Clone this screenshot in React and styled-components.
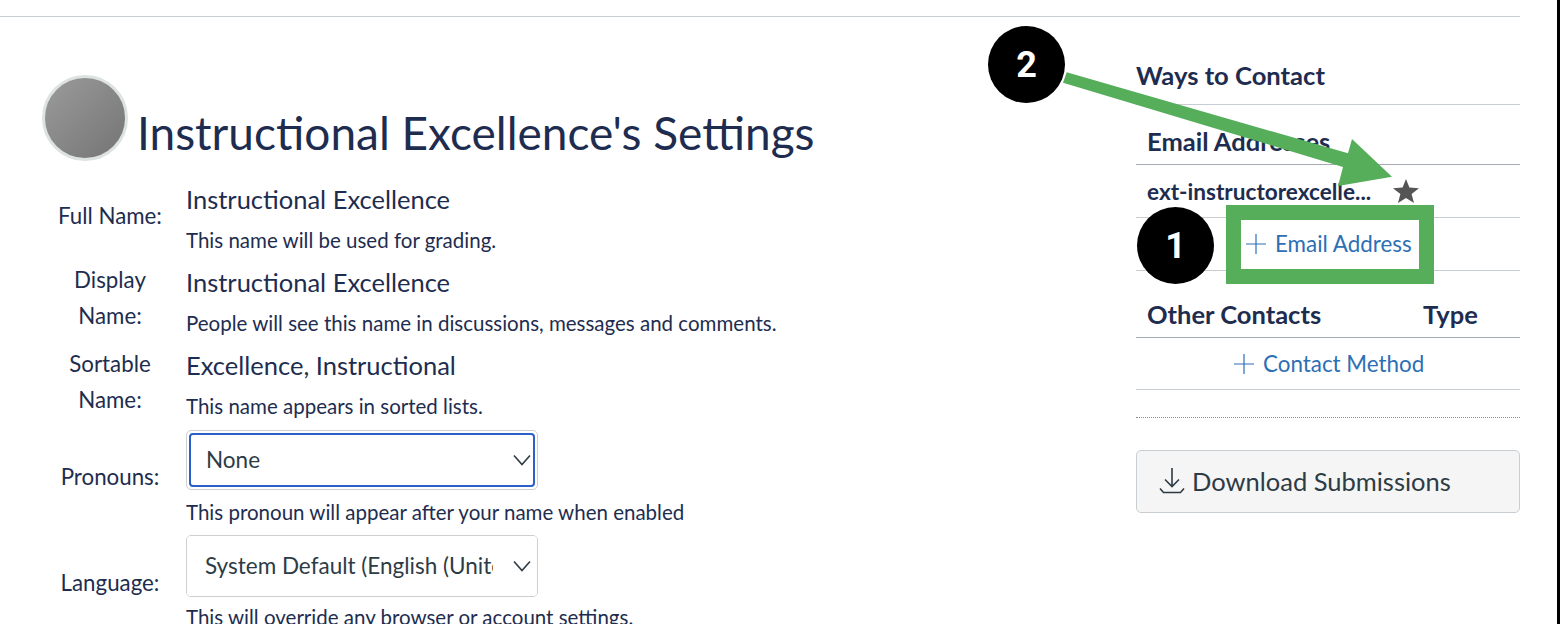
import styled, { createGlobalStyle } from "styled-components";

const GlobalStyle = createGlobalStyle`
    html, body {
        margin: 0;
        padding: 0;
        background: #fff;
        overflow: hidden;
    }
    * {
        box-sizing: border-box;
    }
`

const navy = "#1e2d4f";

const Page = styled.div`
    position: relative;
    width: 1560px;
    height: 624px;
    overflow: hidden;
    background: #fff;
    border-right: 3px solid #000;
    font-family: Lato, "Open Sans", sans-serif;
    color: ${navy};
`
const Inner = styled.div`
    width: 1520px;
    padding-top: 16px;
`
const Columns = styled.div`
    display: flex;
    border-top: 1px solid #c7cdd1;
`
const Main = styled.main`
    flex: 1;
    padding: 58px 0 0 42px;
`
const TitleRow = styled.div`
    display: flex;
    align-items: flex-end;
    gap: 8px;
    height: 86px;
`
const Avatar = styled.div`
    width: 86px;
    height: 86px;
    flex-shrink: 0;
    border-radius: 50%;
    border: 3px solid #dde3e1;
    background: linear-gradient(135deg, #9b9b9b, #747474);
`
const Title = styled.h1`
    margin: 0 0 2px 1px;
    font-size: 46px;
    line-height: 52px;
    font-weight: 400;
    white-space: nowrap;
`
const Form = styled.div`
    display: grid;
    grid-template-columns: 136px 1fr;
    grid-auto-rows: auto;
    margin: 14px 0 0 0;
    column-gap: 8px;
`
const Label = styled.div`
    display: flex;
    align-items: center;
    justify-content: center;
    height: ${(p) => p.$h}px;
    padding-bottom: ${(p) => p.$pb ?? 2}px;
    text-align: center;
    font-size: 22.3px;
    line-height: 35.5px;
`
const Cell = styled.div`
    height: ${(p) => p.$h}px;
    padding-top: ${(p) => p.$top}px;
`
const Value = styled.div`
    font-size: 25.5px;
    line-height: 30px;
`
const Help = styled.div`
    margin-top: ${(p) => p.$gap}px;
    font-size: 20.5px;
    line-height: 26px;
    white-space: nowrap;
`
const SelectBox = styled.div`
    position: relative;
    width: 352px;
    height: ${(p) => p.$h}px;
    padding: ${(p) => (p.$focused ? "2px" : "0")};
    border: 1px solid #ccd0d3;
    border-radius: 5px;
`
const Select = styled.select`
    appearance: none;
    display: block;
    width: 100%;
    height: 100%;
    padding: 0 ${(p) => (p.$focused ? "40px" : "44px")} 2px ${(p) => (p.$focused ? "15px" : "18px")};
    border: ${(p) => (p.$focused ? "2px solid #2c5fc8" : "none")};
    border-radius: 4px;
    background: #fff;
    outline: none;
    font-family: inherit;
    font-size: 22.5px;
    color: #2d3b45;
`
const Chevron = styled.svg`
    position: absolute;
    top: 50%;
    right: 6px;
    width: 18px;
    height: 12px;
    transform: translateY(-50%);
    stroke: #2d3b45;
    stroke-width: 1.6;
    fill: none;
    pointer-events: none;
`
const Aside = styled.aside`
    width: 384px;
    flex-shrink: 0;
`
const Row = styled.div`
    display: flex;
    align-items: ${(p) => (p.$end ? "flex-end" : "center")};
    height: ${(p) => p.$h}px;
    padding-left: ${(p) => p.$left ?? 11}px;
    padding-bottom: ${(p) => p.$pb ?? 0}px;
    border-bottom: 1px solid ${(p) => (p.$dark ? "#a5abb1" : "#c7cdd1")};
`
const SideTitle = styled.h2`
    margin: 0;
    font-size: 25.6px;
    line-height: 30px;
    font-weight: 700;
`
const Head = styled.span`
    font-size: 25.5px;
    line-height: 30px;
    font-weight: 700;
    white-space: nowrap;
`
const TypeHead = styled(Head)`
    margin-left: ${(p) => p.$offset}px;
`
const Email = styled.span`
    font-size: 22.6px;
    font-weight: 700;
    white-space: nowrap;
`
const StarIcon = styled.svg`
    width: 26px;
    height: 24px;
    margin-left: 22px;
    fill: #555;
`
const AddLink = styled.a`
    display: inline-flex;
    align-items: center;
    gap: 9px;
    font-size: 22.4px;
    color: #2d6fb5;
    text-decoration: none;
    white-space: nowrap;
`
const PlusIcon = styled.svg`
    width: 20px;
    height: 20px;
    stroke: #2d6fb5;
    stroke-width: 1.2;
    fill: none;
`
const DottedRule = styled.div`
    margin-top: 27px;
    border-top: 1px dotted #8d8d8d;
`
const DownloadButton = styled.button`
    display: flex;
    align-items: center;
    gap: 7px;
    width: 100%;
    height: 63px;
    margin-top: 32px;
    padding: 0 0 2px 22px;
    background: #f5f5f5;
    border: 1px solid #c7cdd1;
    border-radius: 5px;
    font-family: inherit;
    font-size: 25.5px;
    color: #2d3b45;
`
const DownloadIcon = styled.svg`
    width: 26px;
    height: 28px;
    stroke: #2d3b45;
    stroke-width: 1.6;
    fill: none;
`
const Overlay = styled.svg`
    position: absolute;
    top: 0;
    left: 0;
    width: 1560px;
    height: 624px;
    pointer-events: none;
`
const Badge = styled.div`
    position: absolute;
    top: ${(p) => p.$y}px;
    left: ${(p) => p.$x}px;
    display: flex;
    align-items: center;
    justify-content: center;
    width: 77px;
    height: 77px;
    border-radius: 50%;
    background: #000;
    color: #fff;
    font-family: Roboto, "Liberation Sans", sans-serif;
    font-size: 36px;
    font-weight: 700;
`
const Callout = styled.div`
    position: absolute;
    top: 205px;
    left: 1226px;
    width: 208px;
    height: 79px;
    border: 15px solid #56ae5b;
`

function Plus() {
    return (
        <PlusIcon viewBox="0 0 20 20">
            <path d="M10 0v20M0 10h20" />
        </PlusIcon>
    )
}

function SelectChevron() {
    return (
        <Chevron viewBox="0 0 18 12">
            <path d="M1 1.5l8 9 8-9" />
        </Chevron>
    )
}

function App() {
    return (
        <Page>
            <GlobalStyle />
            <Inner>
                <Columns>
                    <Main>
                        <TitleRow>
                            <Avatar />
                            <Title>Instructional Excellence's Settings</Title>
                        </TitleRow>
                        <Form>
                            <Label $h={83}>Full Name:</Label>
                            <Cell $h={83} $top={9}>
                                <Value>Instructional Excellence</Value>
                                <Help $gap={13}>This name will be used for grading.</Help>
                            </Cell>
                            <Label $h={83} $pb={4}>Display<br />Name:</Label>
                            <Cell $h={83} $top={9}>
                                <Value>Instructional Excellence</Value>
                                <Help $gap={13}>People will see this name in discussions, messages and comments.</Help>
                            </Cell>
                            <Label $h={83} $pb={2}>Sortable<br />Name:</Label>
                            <Cell $h={83} $top={9}>
                                <Value>Excellence, Instructional</Value>
                                <Help $gap={13}>This name appears in sorted lists.</Help>
                            </Cell>
                            <Label $h={106} $pb={0}>Pronouns:</Label>
                            <Cell $h={106} $top={6}>
                                <SelectBox $h={60} $focused>
                                    <Select $focused defaultValue="None">
                                        <option>None</option>
                                    </Select>
                                    <SelectChevron />
                                </SelectBox>
                                <Help $gap={9}>This pronoun will appear after your name when enabled</Help>
                            </Cell>
                            <Label $h={106} $pb={0}>Language:</Label>
                            <Cell $h={106} $top={5}>
                                <SelectBox $h={62}>
                                    <Select defaultValue="System Default (English (United States))">
                                        <option>System Default (English (United States))</option>
                                    </Select>
                                    <SelectChevron />
                                </SelectBox>
                                <Help $gap={7}>This will override any browser or account settings.</Help>
                            </Cell>
                        </Form>
                    </Main>
                    <Aside>
                        <Row $h={88} $end $pb={14} $left={0}>
                            <SideTitle>Ways to Contact</SideTitle>
                        </Row>
                        <Row $h={60} $end $pb={8} $dark>
                            <Head>Email Addresses</Head>
                        </Row>
                        <Row $h={53}>
                            <Email>ext-instructorexcelle...</Email>
                            <StarIcon viewBox="0 0 26 24">
                                <polygon points="13,0 16.4,8.6 26,9.2 18.6,15 21,24 13,19 5,24 7.4,15 0,9.2 9.6,8.6" />
                            </StarIcon>
                        </Row>
                        <Row $h={53} $left={110} $pb={1}>
                            <AddLink href="#">
                                <Plus />
                                Email Address
                            </AddLink>
                        </Row>
                        <Row $h={67} $end $pb={8} $dark>
                            <Head>Other Contacts</Head>
                            <TypeHead $offset={102}>Type</TypeHead>
                        </Row>
                        <Row $h={52} $left={98}>
                            <AddLink href="#">
                                <Plus />
                                Contact Method
                            </AddLink>
                        </Row>
                        <DottedRule />
                        <DownloadButton>
                            <DownloadIcon viewBox="0 0 26 28">
                                <path d="M13 1v18M6 12.5l7 7 7-7M1 21.5l3.5 4h17l3.5-4" />
                            </DownloadIcon>
                            Download Submissions
                        </DownloadButton>
                    </Aside>
                </Columns>
            </Inner>
            <Callout />
            <Overlay viewBox="0 0 1560 624">
                <polygon fill="#56ae5b" points="1066.7,72.3 1348,153.3 1352,139 1392,176.7 1338,186 1343,167 1063,82.7" />
            </Overlay>
            <Badge $x={988} $y={26}>2</Badge>
            <Badge $x={1137} $y={207}>1</Badge>
        </Page>
    )
}

export default App
